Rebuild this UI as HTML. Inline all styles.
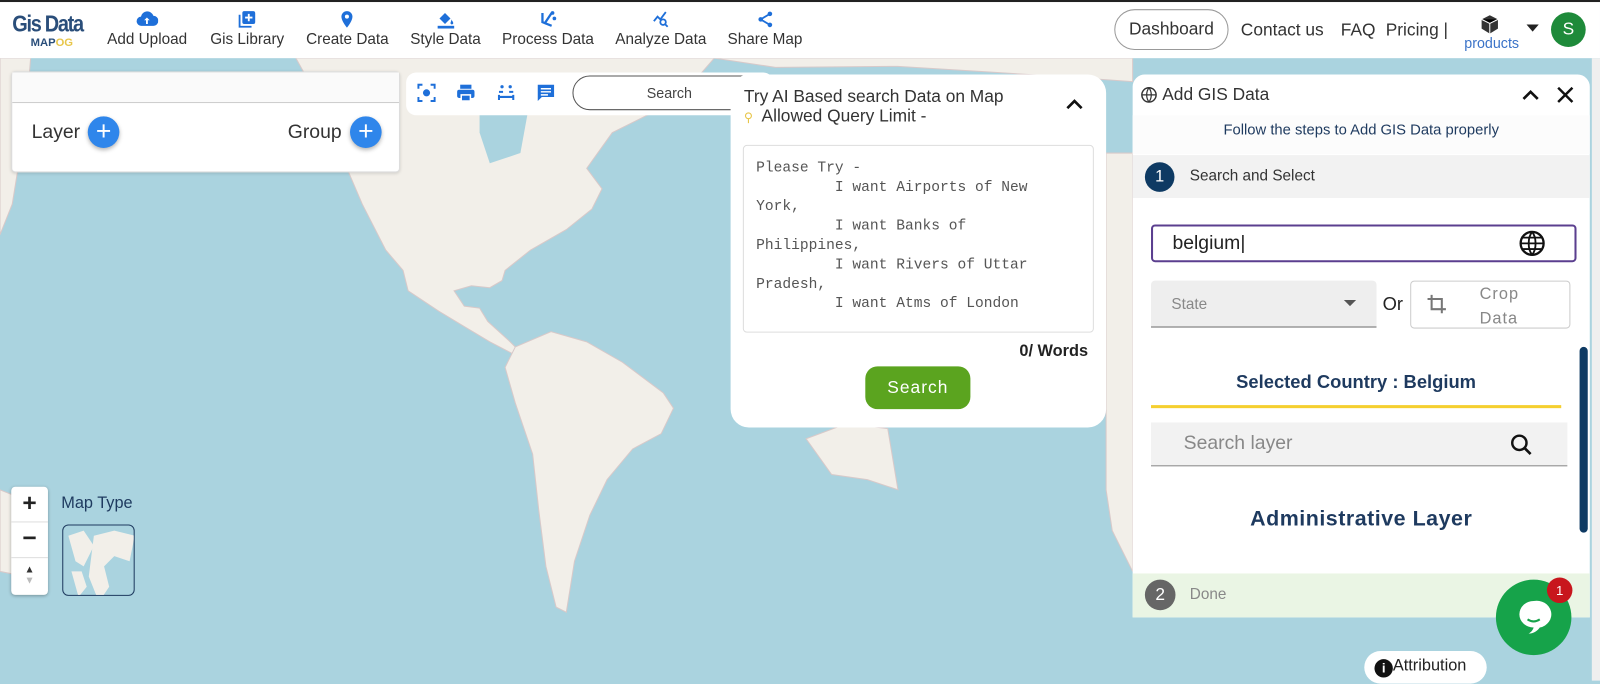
<!DOCTYPE html>
<html><head><meta charset="utf-8"><style>
*{box-sizing:border-box;margin:0;padding:0}
body{width:1600px;height:679px;overflow:hidden;position:relative;font-family:"Liberation Sans",sans-serif;background:#aad3df}
#w{position:absolute;left:0;top:0;width:1568px;height:666px;transform:scale(1.0204);transform-origin:0 0}
.hdr{position:absolute;left:0;top:0;width:1568px;height:57px;background:#fff;border-top:2px solid #222}
.nav{position:absolute;top:8px;text-align:center;font-size:15px;color:#333}
.nav svg{display:block;margin:0 auto 2px}
.abs{position:absolute}
</style></head><body><div id="w">
<svg class="abs" style="left:0;top:57px" width="1568" height="610" viewBox="0 57 1568 610">
<rect x="0" y="57" width="1568" height="610" fill="#aad3df"/>
<g fill="#f2efe9" stroke="#d8c9c9" stroke-width="1">
<path d="M0 57 L30 57 L25 120 L12 200 L0 230 Z"/>
<path d="M290 57 L700 57 L680 80 L640 110 L600 130 L575 165 L590 185 L580 205 L555 225 L520 245 L495 265 L492 275 L480 282 L462 280 L445 285 L455 300 L470 302 L478 315 L500 335 L515 350 L505 348 L480 335 L455 320 L430 305 L400 285 L395 265 L378 245 L355 200 L340 165 L325 120 Z"/>
<path d="M470 100 L520 95 L510 150 L480 160 L470 130 Z" fill="#aad3df" stroke="none"/>
<path d="M505 340 L540 325 L575 335 L610 355 L650 385 L660 400 L648 425 L620 440 L595 470 L578 505 L563 550 L555 600 L545 595 L535 555 L528 500 L522 445 L505 395 L495 360 Z"/>
<path d="M700 57 L1110 57 L1110 80 L1040 75 L960 70 L880 65 L760 66 Z"/>
<path d="M1084 150 L1110 150 L1110 560 L1090 520 L1084 480 Z"/>
<path d="M790 430 L830 415 L870 420 L880 480 L850 470 L815 465 Z"/>
<path d="M0 480 L25 490 L45 540 L25 565 L0 560 Z"/>
</g>
</svg>
<div class="hdr">
<div class="abs" style="left:12px;top:8px;font-weight:bold;font-size:23px;color:#2a4e7a;letter-spacing:-1.5px;transform:scaleX(.85);transform-origin:0 0">Gis Data</div>
<div class="abs" style="left:30px;top:34px;font-weight:bold;font-size:11px;color:#2a4e7a">MAP<span style="color:#e8c64a">OG</span></div>
<div class="nav" style="left:105px"><svg width="22" height="18" viewBox="0 0 24 20"><path d="M6 17a5 5 0 0 1-.5-10A7 7 0 0 1 19 6a5 5 0 0 1 0 11Z" fill="#1e6fd9"/><path d="M12 8l-3 3h2v4h2v-4h2z" fill="#fff"/></svg>Add Upload</div>
<div class="nav" style="left:206px"><svg width="20" height="18" viewBox="0 0 20 20"><rect x="5" y="1" width="14" height="14" rx="2" fill="#1e6fd9"/><path d="M2 5v13h13" stroke="#1e6fd9" stroke-width="2" fill="none"/><path d="M12 4v8M8 8h8" stroke="#fff" stroke-width="2"/></svg>Gis Library</div>
<div class="nav" style="left:300px"><svg width="16" height="18" viewBox="0 0 16 20"><path d="M8 1a6 6 0 0 0-6 6c0 5 6 12 6 12s6-7 6-12a6 6 0 0 0-6-6z" fill="#1e6fd9"/><circle cx="8" cy="7" r="2.2" fill="#fff"/></svg>Create Data</div>
<div class="nav" style="left:402px"><svg width="22" height="18" viewBox="0 0 22 20"><path d="M4 9l6-6 6 6-6 6z" fill="#1e6fd9"/><path d="M17 10c1 2 2 3 2 4a1.5 1.5 0 0 1-3 0c0-1 1-2 1-4z" fill="#1e6fd9"/><rect x="2" y="17" width="18" height="3" fill="#1e6fd9"/></svg>Style Data</div>
<div class="nav" style="left:492px"><svg width="20" height="18" viewBox="0 0 20 20"><path d="M4 3v10l10 4M14 3l-8 12" stroke="#1e6fd9" stroke-width="2.5" fill="none"/><circle cx="15" cy="3" r="2" fill="#1e6fd9"/><circle cx="17" cy="9" r="2" fill="#1e6fd9"/></svg>Process Data</div>
<div class="nav" style="left:603px"><svg width="20" height="18" viewBox="0 0 20 20"><path d="M2 12l4-5 3 3 6-8" stroke="#1e6fd9" stroke-width="2" fill="none"/><circle cx="12" cy="13" r="3" stroke="#1e6fd9" stroke-width="2" fill="none"/><path d="M14 15l3 3" stroke="#1e6fd9" stroke-width="2"/></svg>Analyze Data</div>
<div class="nav" style="left:713px"><svg width="18" height="18" viewBox="0 0 20 20"><circle cx="15" cy="4" r="2.5" fill="#1e6fd9"/><circle cx="5" cy="10" r="2.5" fill="#1e6fd9"/><circle cx="15" cy="16" r="2.5" fill="#1e6fd9"/><path d="M15 4L5 10l10 6" stroke="#1e6fd9" stroke-width="2" fill="none"/></svg>Share Map</div>
<div class="abs" style="left:1092px;top:7px;width:112px;height:40px;border:1px solid #999;border-radius:20px;font-size:17px;color:#333;text-align:center;line-height:38px">Dashboard</div>
<div class="abs" style="left:1216px;top:18px;font-size:17px;color:#333">Contact us</div>
<div class="abs" style="left:1314px;top:18px;font-size:17px;color:#333">FAQ</div>
<div class="abs" style="left:1358px;top:18px;font-size:17px;color:#333">Pricing |</div>
<svg class="abs" style="left:1451px;top:12px" width="18" height="20" viewBox="0 0 18 20"><path d="M9 1l8 4v9l-8 5-8-5V5z" fill="#333"/><path d="M1 5l8 4 8-4M9 9v10" stroke="#fff" stroke-width="1"/></svg>
<div class="abs" style="left:1435px;top:32px;font-size:14px;color:#3b73c8">products</div>
<div class="abs" style="left:1496px;top:22px;width:0;height:0;border:6px solid transparent;border-top:7px solid #222"></div>
<div class="abs" style="left:1520px;top:10px;width:34px;height:34px;border-radius:50%;background:#1e8a3a;color:#fff;text-align:center;line-height:34px;font-size:17px">S</div>
</div>
<div class="abs" style="left:1560px;top:57px;width:10px;height:610px;background:#efefef"></div>
<div class="abs" style="left:11px;top:70px;width:381px;height:99px;background:#fff;border:1px solid #ddd;border-radius:4px;box-shadow:0 1px 3px rgba(0,0,0,.15)">
<div style="height:30px;border-bottom:1px solid #ccc;background:#fafafa"></div>
<div class="abs" style="left:19px;top:48px;font-size:19px;color:#333">Layer</div>
<div class="abs" style="left:74px;top:43px;width:31px;height:31px;border-radius:50%;background:#2f86eb;color:#fff;font-size:26px;line-height:29px;text-align:center;box-shadow:0 2px 4px rgba(0,0,0,.3)">+</div>
<div class="abs" style="left:270px;top:48px;font-size:19px;color:#333">Group</div>
<div class="abs" style="left:331px;top:43px;width:31px;height:31px;border-radius:50%;background:#2f86eb;color:#fff;font-size:26px;line-height:29px;text-align:center;box-shadow:0 2px 4px rgba(0,0,0,.3)">+</div>
</div>
<div class="abs" style="left:398px;top:71px;width:360px;height:42px;background:#fff;border-radius:10px"></div>
<svg class="abs" style="left:409px;top:82px" width="18" height="18" viewBox="0 0 18 18"><path d="M1 5V1h4M13 1h4v4M17 13v4h-4M5 17H1v-4" stroke="#1e6fd9" stroke-width="2" fill="none"/><circle cx="9" cy="9" r="3.5" fill="#1e6fd9"/></svg>
<svg class="abs" style="left:447px;top:82px" width="19" height="18" viewBox="0 0 19 18"><rect x="4" y="1" width="11" height="4" fill="#1e6fd9"/><rect x="1" y="6" width="17" height="8" rx="2" fill="#1e6fd9"/><rect x="5" y="11" width="9" height="6" fill="#1e6fd9" stroke="#fff" stroke-width="1.5"/></svg>
<svg class="abs" style="left:487px;top:82px" width="18" height="18" viewBox="0 0 18 18"><circle cx="5" cy="3" r="1.6" fill="#1e6fd9"/><circle cx="13" cy="3" r="1.6" fill="#1e6fd9"/><path d="M2 8h4M12 8h4M1 13h16M2 11v5M16 11v5" stroke="#1e6fd9" stroke-width="2"/></svg>
<svg class="abs" style="left:526px;top:82px" width="18" height="18" viewBox="0 0 18 18"><path d="M1 1h16v12H5l-4 4z" fill="#1e6fd9"/><path d="M4 5h10M4 8h10M4 11h7" stroke="#fff" stroke-width="1.4"/></svg>
<div class="abs" style="left:561px;top:74px;width:190px;height:34px;border:1px solid #555;border-radius:17px;font-size:14px;color:#444;text-align:center;line-height:32px">Search</div>
<div class="abs" style="left:716px;top:73px;width:368px;height:346px;background:#fff;border-radius:18px"></div>
<div class="abs" style="left:729px;top:85px;font-size:17px;color:#333">Try AI Based search Data on Map</div>
<div class="abs" style="left:729px;top:104px;font-size:17px;color:#333"><span style="color:#e8c64a;font-size:12px">&#9906;</span>&nbsp; Allowed Query Limit -</div>
<svg class="abs" style="left:1043px;top:95px" width="20" height="14" viewBox="0 0 20 14"><path d="M3 11l7-7 7 7" stroke="#111" stroke-width="2.6" fill="none"/></svg>
<div class="abs" style="left:728px;top:142px;width:344px;height:184px;border:1px solid #ddd;border-radius:4px;font-family:'Liberation Mono',monospace;font-size:14.3px;color:#555;line-height:19px;padding:13px 12px;white-space:pre">Please Try -
         I want Airports of New
York,
         I want Banks of
Philippines,
         I want Rivers of Uttar
Pradesh,
         I want Atms of London</div>
<div class="abs" style="left:999px;top:336px;font-size:16px;font-weight:bold;color:#222">0/ Words</div>
<div class="abs" style="left:848px;top:359px;width:103px;height:42px;border-radius:12px;background:#5ba41f;color:#fff;font-size:17px;text-align:center;line-height:42px;letter-spacing:1px">Search</div>
<div class="abs" style="left:1110px;top:73px;width:448px;height:532px;background:#fff;border-radius:12px 12px 0 0"></div>
<svg class="abs" style="left:1118px;top:85px" width="16" height="16" viewBox="0 0 16 16"><circle cx="8" cy="8" r="7" stroke="#333" stroke-width="1.4" fill="none"/><path d="M1 8h14M8 1c-3 4-3 10 0 14M8 1c3 4 3 10 0 14" stroke="#333" stroke-width="1.2" fill="none"/></svg>
<div class="abs" style="left:1139px;top:83px;font-size:17px;color:#333">Add GIS Data</div>
<svg class="abs" style="left:1490px;top:85px" width="20" height="16" viewBox="0 0 20 16"><path d="M3 12l7-7 7 7" stroke="#111" stroke-width="2.6" fill="none"/></svg>
<svg class="abs" style="left:1524px;top:83px" width="20" height="20" viewBox="0 0 20 20"><path d="M3 3l14 14M17 3L3 17" stroke="#111" stroke-width="2.4"/></svg>
<div class="abs" style="left:1110px;top:113px;width:448px;height:38px;background:#fcfcfc;text-align:center;font-size:14.5px;color:#1e3a5f;line-height:30px">Follow the steps to Add GIS Data properly</div>
<div class="abs" style="left:1110px;top:152px;width:448px;height:42px;background:#f2f2f2"></div>
<div class="abs" style="left:1122px;top:159px;width:29px;height:29px;border-radius:50%;background:#0e3a63;color:#fff;text-align:center;line-height:29px;font-size:16px">1</div>
<div class="abs" style="left:1166px;top:164px;font-size:15px;color:#333">Search and Select</div>
<div class="abs" style="left:1128px;top:220px;width:417px;height:37px;border:2px solid #5b3f8f;border-radius:4px;font-size:19px;color:#222;padding-left:19px;line-height:33px">belgium|</div>
<svg class="abs" style="left:1488px;top:225px" width="27" height="27" viewBox="0 0 24 24"><circle cx="12" cy="12" r="10" stroke="#111" stroke-width="2" fill="none"/><path d="M2 12h20M12 2c-4 5-4 15 0 20M12 2c4 5 4 15 0 20M4 7h16M4 17h16" stroke="#111" stroke-width="1.6" fill="none"/></svg>
<div class="abs" style="left:1128px;top:275px;width:221px;height:46px;background:#eee;border-bottom:1px solid #666;border-radius:4px 4px 0 0;font-size:15px;color:#888;padding:15px 20px">State</div>
<div class="abs" style="left:1317px;top:294px;width:0;height:0;border:6px solid transparent;border-top:6px solid #555"></div>
<div class="abs" style="left:1355px;top:288px;font-size:18px;color:#222">Or</div>
<div class="abs" style="left:1382px;top:275px;width:157px;height:47px;border:1px solid #ccc;border-radius:4px"></div>
<svg class="abs" style="left:1398px;top:288px" width="20" height="20" viewBox="0 0 20 20"><path d="M5 1v14h14M1 5h14v14" stroke="#777" stroke-width="2" fill="none"/></svg>
<div class="abs" style="left:1450px;top:277px;font-size:16px;color:#888;line-height:24px;letter-spacing:1px">Crop<br>Data</div>
<div class="abs" style="left:1110px;top:364px;width:438px;text-align:center;font-size:18px;font-weight:bold;color:#1e3a5f">Selected Country : Belgium</div>
<div class="abs" style="left:1128px;top:397px;width:402px;height:3px;background:#f5cf2f"></div>
<div class="abs" style="left:1128px;top:414px;width:408px;height:43px;background:#f2f2f2;border-bottom:1px solid #888;font-size:19px;color:#888;padding:10px 32px">Search layer</div>
<svg class="abs" style="left:1479px;top:424px" width="24" height="24" viewBox="0 0 24 24"><circle cx="10" cy="10" r="7" stroke="#111" stroke-width="2.4" fill="none"/><path d="M15 15l6 6" stroke="#111" stroke-width="2.6"/></svg>
<div class="abs" style="left:1110px;top:497px;width:448px;text-align:center;font-size:21px;font-weight:bold;color:#1e3a5f;letter-spacing:.5px">Administrative Layer</div>
<div class="abs" style="left:1548px;top:340px;width:8px;height:182px;background:#0e3a63;border-radius:4px"></div>
<div class="abs" style="left:1110px;top:562px;width:448px;height:43px;background:#eaf5e4"></div>
<div class="abs" style="left:1122px;top:568px;width:30px;height:30px;border-radius:50%;background:#666;color:#fff;text-align:center;line-height:30px;font-size:17px">2</div>
<div class="abs" style="left:1166px;top:574px;font-size:15px;color:#888">Done</div>
<div class="abs" style="left:1466px;top:568px;width:74px;height:74px;border-radius:50%;background:#16a34a"></div>
<svg class="abs" style="left:1484px;top:585px" width="38" height="40" viewBox="0 0 38 40"><path d="M19 4a14 13 0 1 0 0 26c-1 3-3 5-5 6 5 0 9-3 11-6a14 13 0 0 0-6-26z" fill="#fff"/><path d="M13 22q6 4 12 0" stroke="#16a34a" stroke-width="2" fill="none"/></svg>
<div class="abs" style="left:1516px;top:566px;width:25px;height:25px;border-radius:50%;background:#c8161d;color:#fff;font-size:13px;text-align:center;line-height:25px">1</div>
<div class="abs" style="left:1337px;top:638px;width:120px;height:32px;border-radius:16px;background:#fff;font-size:16px;color:#222;line-height:30px;padding-left:10px"><span style="display:inline-block;width:18px;height:18px;border-radius:50%;background:#111;color:#fff;font-size:13px;text-align:center;line-height:18px;font-weight:bold;vertical-align:-2px">i</span>Attribution</div>
<div class="abs" style="left:11px;top:477px;width:36px;height:106px;background:#fff;border-radius:4px;box-shadow:0 1px 3px rgba(0,0,0,.3)">
<div style="height:35px;border-bottom:1px solid #ddd;text-align:center;font-size:24px;font-weight:bold;line-height:34px;color:#222">+</div>
<div style="height:35px;border-bottom:1px solid #ddd;text-align:center;font-size:24px;font-weight:bold;line-height:32px;color:#222">−</div>
<div style="text-align:center;font-size:10px;line-height:11px;padding-top:6px;color:#333">▲<br><span style="color:#bbb">▼</span></div>
</div>
<div class="abs" style="left:60px;top:485px;font-size:16px;color:#1e3a5f">Map Type</div>
<div class="abs" style="left:61px;top:514px;width:71px;height:70px;border:1px solid #1e3a5f;border-radius:6px;background:#aad3df;overflow:hidden">
<svg width="71" height="70"><g fill="#f2efe9"><path d="M5 10l15-5 10 15-10 20-8-5z"/><path d="M30 10l20-5 20 5-5 25-15-5-10 10 5 20-10 15-10-25z"/><path d="M8 45l10 0 5 15-8 10z"/></g></svg>
</div>
</div></body></html>
